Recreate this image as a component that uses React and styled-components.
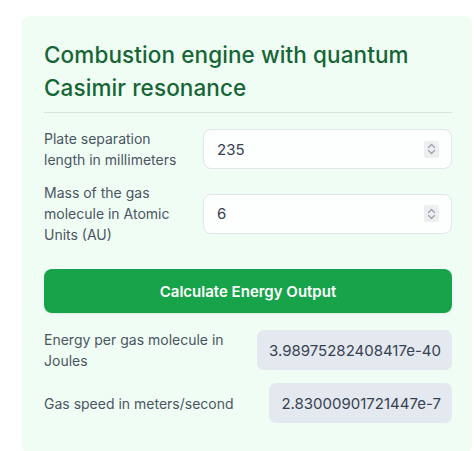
import React from "react";
import styled, { createGlobalStyle } from "styled-components";

const GlobalStyle = createGlobalStyle`
    html, body {
        margin: 0;
        padding: 0;
        background: #ffffff;
        font-family: Inter, "Noto Sans", sans-serif;
    }
`;

const Page = styled.div`
    padding: 16px 2px 2px 22px;
`;

const Card = styled.div`
    background: #f0fdf4;
    border-radius: 8px;
    box-shadow: 0 1px 2px rgba(0, 0, 0, 0.04);
    padding: 22px 20px 29px 22px;
`;

const Title = styled.h2`
    margin: 0;
    font-size: 22.5px;
    font-weight: 500;
    line-height: 33px;
    color: #166534;
    padding-bottom: 8px;
    border-bottom: 1px solid #d5e5dc;
    margin-bottom: 15px;
    letter-spacing: 0.1px;
`;

const FieldRow = styled.div`
    display: grid;
    grid-template-columns: 147px 1fr;
    column-gap: 12px;
    align-items: center;
    margin-bottom: 12px;
`;

const Label = styled.label`
    font-size: 14px;
    line-height: 21px;
    color: #4b5563;
`;

const InputBox = styled.div`
    display: flex;
    align-items: center;
    justify-content: space-between;
    height: 40px;
    box-sizing: border-box;
    background: #fdfefe;
    border: 1px solid #e2e6ea;
    border-radius: 8px;
    padding: 0 12px 0 13px;
    font-size: 15px;
    color: #374151;
`;

const Spinner = styled.span`
    display: flex;
    align-items: center;
    justify-content: center;
    width: 15px;
    height: 17px;
    background: #eceef0;
    border-radius: 2px;
`;

const Button = styled.button`
    display: block;
    width: 100%;
    height: 44px;
    margin: 24px 0 16px;
    border: none;
    border-radius: 8px;
    background: #16a34a;
    color: #ffffff;
    font-family: Inter, "Noto Sans", sans-serif;
    font-size: 15px;
    font-weight: 600;
    box-shadow: 0 1px 2px rgba(0, 0, 0, 0.08);
`;

const ResultRow = styled.div`
    display: flex;
    align-items: center;
    justify-content: space-between;
    gap: 12px;
    margin-bottom: 12px;

    &:last-child {
        margin-bottom: 0;
    }
`;

const ResultLabel = styled.span`
    font-size: 14px;
    line-height: 21px;
    color: #4b5563;
    max-width: 215px;
`;

const Value = styled.span`
    background: #e4e8ef;
    border-radius: 7px;
    padding: 0 11px 0 12px;
    height: 40px;
    display: flex;
    align-items: center;
    font-size: 15px;
    color: #374151;
    white-space: nowrap;
`;

const Arrows = () => (
    <svg width="9" height="12" viewBox="0 0 9 12" fill="none" stroke="#9aa1aa" strokeWidth="1.2" strokeLinecap="round" strokeLinejoin="round">
        <path d="M1.5 4.5 L4.5 1.5 L7.5 4.5" />
        <path d="M1.5 7.5 L4.5 10.5 L7.5 7.5" />
    </svg>
);

const Field = ({ label, value }) => (
    <FieldRow>
        <Label>{label}</Label>
        <InputBox>
            <span>{value}</span>
            <Spinner><Arrows /></Spinner>
        </InputBox>
    </FieldRow>
);

const Result = ({ label, value }) => (
    <ResultRow>
        <ResultLabel>{label}</ResultLabel>
        <Value>{value}</Value>
    </ResultRow>
);

const App = () => (
    <Page>
        <GlobalStyle />
        <Card>
            <Title>Combustion engine with quantum Casimir resonance</Title>
            <Field label="Plate separation length in millimeters" value="235" />
            <Field label="Mass of the gas molecule in Atomic Units (AU)" value="6" />
            <Button>Calculate Energy Output</Button>
            <Result label="Energy per gas molecule in Joules" value="3.98975282408417e-40" />
            <Result label="Gas speed in meters/second" value="2.83000901721447e-7" />
        </Card>
    </Page>
);

export default App;
